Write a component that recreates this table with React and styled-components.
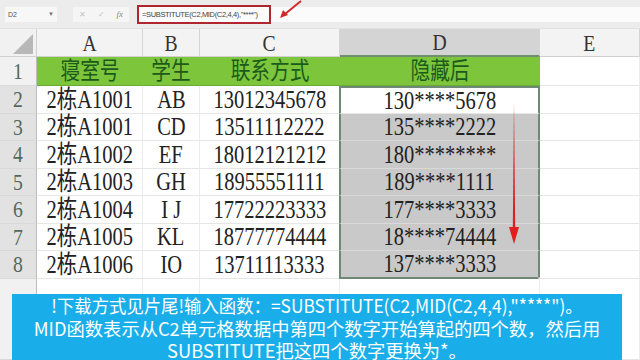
import React from "react";
import styled, { createGlobalStyle } from "styled-components";

const Global = createGlobalStyle`
  html, body { margin: 0; padding: 0; background: #fff; }
  body { width: 640px; height: 360px; overflow: hidden; }
  #root { width: 640px; height: 360px; }
`;

const Page = styled.div`
  position: relative;
  width: 640px;
  height: 360px;
  overflow: hidden;
  display: flex;
  flex-direction: column;
  background: #fff;
`;

const TopBar = styled.div`
  height: 29px;
  flex: none;
  display: flex;
  align-items: center;
  gap: 10px;
  padding: 0 0 0 5px;
  background: #ececec;
  border-bottom: 1px solid #e2e2e2;
  box-sizing: border-box;
  font-family: "Liberation Sans", Arial, sans-serif;
`;

const NameBox = styled.div`
  width: 52px;
  height: 15px;
  background: #f7f7f7;
  display: flex;
  align-items: center;
  justify-content: space-between;
  padding: 0 3px 0 3px;
  box-sizing: border-box;
  font-size: 7px;
  color: #555;
`;

const Caret = styled.span`
  font-size: 6px;
  color: #777;
`;

const IconBox = styled.div`
  width: 56px;
  height: 15px;
  margin-left: 6px;
  background: #f5f5f5;
  display: flex;
  align-items: center;
  justify-content: space-around;
  font-size: 8px;
  color: #c4c4c4;
`;

const FxMark = styled.span`
  font-style: italic;
  font-family: "Liberation Serif", serif;
  color: #888;
  font-size: 9px;
`;

const FormulaField = styled.div`
  flex: 1;
  height: 15px;
  background: #fbfbfb;
  display: flex;
  align-items: center;
  margin-left: -2px;
`;

const FormulaMark = styled.div`
  height: 19px;
  width: 134px;
  border: 2px solid #b0262e;
  box-sizing: border-box;
  display: flex;
  align-items: center;
  padding-left: 3px;
  font-size: 7.5px;
  letter-spacing: -0.35px;
  color: #444;
  white-space: nowrap;
  overflow: hidden;
`;

const Pointer = styled.svg`
  width: 26px;
  height: 22px;
  margin: -6px 0 0 6px;
`;

const Sheet = styled.div`
  position: relative;
  flex: 1;
  display: grid;
  grid-template-columns: 37px 106px 57px 140px 200px 1fr;
  grid-template-rows: 28px 29px repeat(7, 27.5px) 1fr;
  font-family: "Liberation Serif", "Noto Sans CJK SC", serif;
`;

const Corner = styled.div`
  background: #f1f1f1;
  border-right: 1px solid #d0d0d0;
  border-bottom: 1px solid #d0d0d0;
  display: flex;
  align-items: flex-end;
  justify-content: flex-end;
  padding: 0 3px 2px 0;
`;

const ColHead = styled.div`
  background: ${(p) => (p.$selected ? "#d4d4d4" : "#f3f3f3")};
  border-right: 1px solid #d6d6d6;
  border-bottom: ${(p) => (p.$selected ? "2px solid #6f8f6f" : "1px solid #d0d0d0")};
  display: flex;
  align-items: center;
  justify-content: center;
  color: #333;
  box-sizing: border-box;
`;

const RowHead = styled.div`
  background: ${(p) => (p.$selected ? "#e2e2e2" : "#f1f1f1")};
  border-right: 1px solid #bcbcbc;
  border-bottom: 1px solid #d8d8d8;
  display: flex;
  align-items: center;
  justify-content: center;
  color: #55685a;
  box-sizing: border-box;
`;

const cellBg = {
  header: "#7dc63b",
  plain: "#ffffff",
  active: "#ffffff",
  masked: "#c9c9c9",
  empty: "#ffffff",
};

const Cell = styled.div`
  position: relative;
  background: ${(p) => cellBg[p.$variant]};
  color: ${(p) => (p.$variant === "header" ? "#1b5a1b" : "#222")};
  display: flex;
  align-items: center;
  justify-content: center;
  box-sizing: border-box;
  border-bottom: 1px solid
    ${(p) =>
      p.$variant === "header" ? "#6aa934" : p.$variant === "masked" ? "#d9d9d9" : "#e6e6e6"};
  border-right: 1px solid
    ${(p) => (p.$variant === "header" ? "#7dc63b" : "#ececec")};
  ${(p) =>
    p.$selected &&
    `
    border-left: 2px solid #6f8a74;
    border-right: 2px solid #6f8a74;
    margin-left: -1px;
  `}
  ${(p) => p.$first && `border-top: 2px solid #6f8a74;`}
  ${(p) => p.$last && `border-bottom: 2px solid #6f8a74;`}
`;

const Txt = styled.span`
  display: inline-block;
  white-space: nowrap;
  font-size: ${(p) => p.$size || 25}px;
  line-height: 1;
  transform: scaleX(0.82);
`;

const FillHandle = styled.div`
  position: absolute;
  right: -8px;
  bottom: -8px;
  width: 6px;
  height: 6px;
  background: #e8e8e8;
  border: 1px solid #bbb;
`;

const DownArrow = styled.svg`
  position: absolute;
  left: 506px;
  top: 70px;
  width: 16px;
  height: 148px;
`;

const Caption = styled.div`
  position: absolute;
  left: 12px;
  top: 294px;
  width: 610px;
  height: 70px;
  background: #19aee9;
  color: #fff;
  font-family: "Noto Sans CJK SC", "Noto Sans", sans-serif;
  font-size: 18.3px;
  line-height: 22.5px;
  text-align: center;
  box-sizing: border-box;
`;

const CapLine = styled.div`
  white-space: nowrap;
  transform: scaleX(${(p) => p.$sx || 1});
`;

const cols = ["A", "B", "C", "D", "E"];

const rows = [
  ["2栋A1001", "AB", "13012345678", "130****5678"],
  ["2栋A1001", "CD", "13511112222", "135****2222"],
  ["2栋A1002", "EF", "18012121212", "180********"],
  ["2栋A1003", "GH", "18955551111", "189****1111"],
  ["2栋A1004", "I J", "17722223333", "177****3333"],
  ["2栋A1005", "KL", "18777774444", "18****74444"],
  ["2栋A1006", "IO", "13711113333", "137****3333"],
];

const header = ["寝室号", "学生", "联系方式", "隐藏后"];

export default function App() {
  return (
    <Page>
      <Global />
      <TopBar>
        <NameBox>
          <span>D2</span>
          <Caret>▼</Caret>
        </NameBox>
        <IconBox>
          <span>✕</span>
          <span>✓</span>
          <FxMark>fx</FxMark>
        </IconBox>
        <FormulaField>
          <FormulaMark>=SUBSTITUTE(C2,MID(C2,4,4),"****")</FormulaMark>
          <Pointer viewBox="0 0 26 22">
            <path d="M24 1 L8 14" stroke="#d02a2a" strokeWidth="2" fill="none" />
            <path d="M3 18 L6 10 L11 15 Z" fill="#d02a2a" />
          </Pointer>
        </FormulaField>
      </TopBar>

      <Sheet>
        <Corner>
          <svg width="20" height="20" viewBox="0 0 20 20">
            <path d="M20 0 L20 20 L0 20 Z" fill="#b8b8b8" />
          </svg>
        </Corner>
        {cols.map((c) => (
          <ColHead key={c} $selected={c === "D"}>
            <Txt $size={24}>{c}</Txt>
          </ColHead>
        ))}

        <RowHead>
          <Txt $size={24}>1</Txt>
        </RowHead>
        {header.map((h) => (
          <Cell key={h} $variant="header">
            <Txt $size={24}>{h}</Txt>
          </Cell>
        ))}
        <Cell $variant="empty" />

        {rows.map((r, i) => (
          <React.Fragment key={i}>
            <RowHead $selected>
              <Txt $size={24}>{i + 2}</Txt>
            </RowHead>
            <Cell $variant="plain">
              <Txt>{r[0]}</Txt>
            </Cell>
            <Cell $variant="plain">
              <Txt>{r[1]}</Txt>
            </Cell>
            <Cell $variant="plain">
              <Txt>{r[2]}</Txt>
            </Cell>
            <Cell
              $variant={i === 0 ? "active" : "masked"}
              $selected
              $first={i === 0}
              $last={i === rows.length - 1}
            >
              <Txt>{r[3]}</Txt>
              {i === rows.length - 1 && <FillHandle />}
            </Cell>
            <Cell $variant="empty" />
          </React.Fragment>
        ))}

        <RowHead>
          <Txt $size={24}>9</Txt>
        </RowHead>
        <Cell $variant="empty" />
        <Cell $variant="empty" />
        <Cell $variant="empty" />
        <Cell $variant="empty" />
        <Cell $variant="empty" />

        <DownArrow viewBox="0 0 16 148">
          <path d="M8 2 L9.2 130 L6.8 130 Z" fill="#e01f1f" />
          <path d="M3 128 L13 128 L8 145 Z" fill="#e01f1f" />
        </DownArrow>
      </Sheet>

      <Caption>
        <CapLine $sx={0.95}>!下载方式见片尾!输入函数：=SUBSTITUTE(C2,MID(C2,4,4),"****")。</CapLine>
        <CapLine>MID函数表示从C2单元格数据中第四个数字开始算起的四个数，然后用</CapLine>
        <CapLine>SUBSTITUTE把这四个数字更换为*。</CapLine>
      </Caption>
    </Page>
  );
}
